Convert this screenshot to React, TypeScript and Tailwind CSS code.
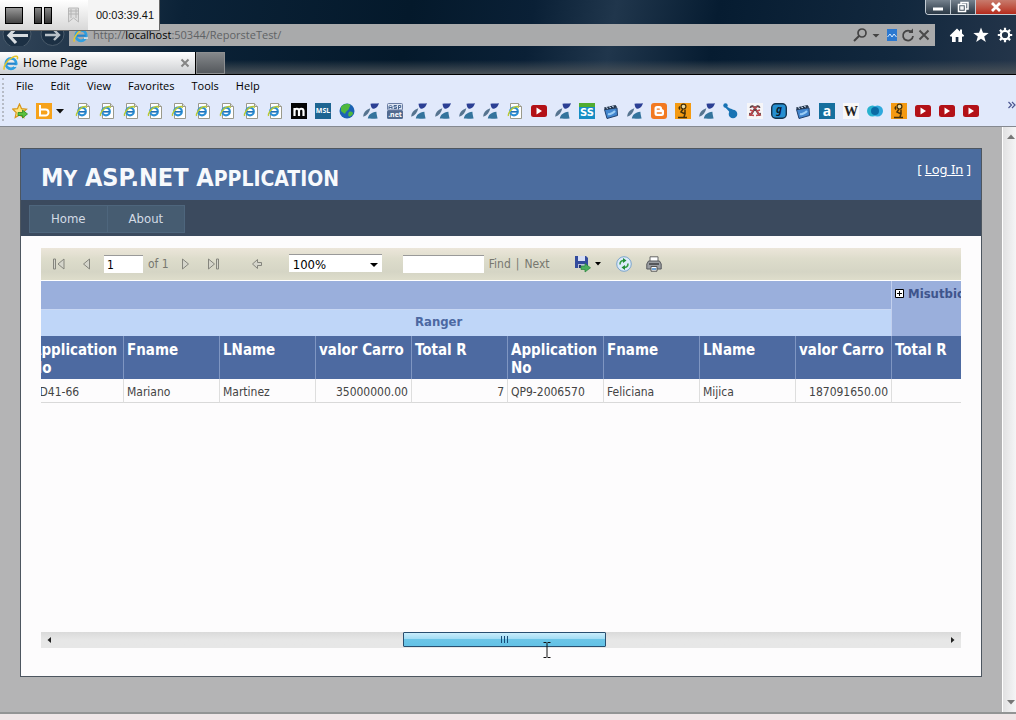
import React from "react";

const UI = "font-['Open_Sans','Noto_Sans',sans-serif]";
const TAHOMA = "font-['DejaVu_Sans_Condensed','DejaVu_Sans',sans-serif]";

type IconProps = { className?: string };

function Svg({ children, className = "size-4", box = "0 0 16 16" }: { children: React.ReactNode; className?: string; box?: string }) {
  return (
    <svg viewBox={box} className={`${className} block shrink-0`} aria-hidden="true">
      {children}
    </svg>
  );
}

function IeLogo({ className }: IconProps) {
  return (
    <Svg className={className}>
      <circle cx="8" cy="8.6" r="5.2" fill="none" stroke="#2f9fe0" strokeWidth="2.8" />
      <path d="M4 7.6h8.6v2.2H4z" fill="#2484cc" />
      <path d="M11 10.2h4v1.6l-4 .2z" fill="#dfe8ee" />
      <path d="M1.4 14.6C-.2 12 4 5.400 9 2.600c4-2.200 6.600-1.800 5.200 1.600" fill="none" stroke="#e6c62c" strokeWidth="1.5" />
    </Svg>
  );
}

function PageE() {
  return (
    <Svg>
      <path d="M3.500.5h8l3 3v12h-11z" fill="#fff" stroke="#9a9a8c" />
      <path d="M11.500.5v3h3" fill="#ddd" stroke="#9a9a8c" />
      <circle cx="7" cy="8.500" r="3.800" fill="none" stroke="#2a8ed4" strokeWidth="2.200" />
      <path d="M4 8h6.500v1.600H4z" fill="#1d6fb8" />
      <path d="M1.500 13C.6 10.500 4 6 7.500 4.200c2.500-1.200 4.200-1 3.600.8" fill="none" stroke="#b9c932" strokeWidth="1.400" />
    </Svg>
  );
}

function AddFavorite() {
  return (
    <Svg>
      <path d="M7.500 1l2 4.600 5 .5-3.700 3.400 1 5-4.300-2.600L3.200 14.500l1-5L.6 6.100l4.900-.5z" fill="#ffe680" stroke="#d8961a" strokeWidth="1.200" />
      <path d="M6 9.500h4.500V7l5 4-5 4v-2.500H6z" fill="#5ac13e" stroke="#2b8a24" strokeWidth=".8" />
    </Svg>
  );
}

function Bing() {
  return (
    <Svg>
      <rect width="16" height="16" fill="#f6a21b" />
      <path d="M4 2v10.500h5.500a3 3 0 0 0 0-6H5" fill="none" stroke="#fff" strokeWidth="2" />
    </Svg>
  );
}

function MTile() {
  return (
    <Svg>
      <rect width="16" height="16" fill="#050505" />
      <path d="M3.500 13V5M3.500 8c0-3 4.500-3 4.500 0v5M8 8c0-3 4.500-3 4.500 0v5" fill="none" stroke="#fff" strokeWidth="2.200" />
    </Svg>
  );
}

function TextTile({ label, bg, size, color = "#fff", font = "Noto Sans" }: { label: string; bg: string; size: number; color?: string; font?: string }) {
  return (
    <Svg>
      <rect width="16" height="16" fill={bg} />
      <text x="8" y={8 + size * 0.34} textAnchor="middle" fontFamily={font} fontWeight="700" fontSize={size} fill={color}>
        {label}
      </text>
    </Svg>
  );
}

function Globe() {
  return (
    <Svg>
      <circle cx="8" cy="8" r="7.500" fill="#1b62b4" />
      <path d="M2 4c2-3 7-4 9-2.500 1 1.500-1 2.500-1 4S7 8 6.500 10 3 9 2 8zM10 9c2-1 4 0 4 1.500S11 14 10 13.500 9 10 10 9z" fill="#4fb83c" />
    </Svg>
  );
}

function Leaf() {
  return (
    <Svg>
      <path d="M7.500.8C10 .4 13.500.8 16 .3c-1 3-2.500 4.900-5 5.400C9 6 8 4.500 7.500.8z" fill="#2b3f94" />
      <path d="M.3 13.800C0 10 2.500 7 7.300 5.200 6.500 9 4.300 12.300.3 13.800z" fill="#56748f" />
      <path d="M4.800 15.600C5.500 11.500 8.200 9.400 13.400 8.700c.1 2.400.6 4.200 1.200 6.700-3 .4-6.500.4-9.800.2z" fill="#34749d" />
    </Svg>
  );
}

function AspNet() {
  return (
    <Svg>
      <rect y="7" width="16" height="9" rx="1.500" fill="#526b90" />
      <rect x=".5" y=".5" width="15" height="6.500" rx="1" fill="#dce4f2" stroke="#6c7fa5" />
      <path d="M2 6V3.500L3.500 2 5 3.500V6M2 4.500h3M9.800 2.500H7v1.500h2.500v1.500H6.800M11.500 6.500v-4h2.200v2h-2" fill="none" stroke="#44638e" />
      <text x="8" y="14" textAnchor="middle" fontSize="7" fontWeight="700" fontFamily="Noto Sans" fill="#fff">.net</text>
    </Svg>
  );
}

function Tube() {
  return (
    <Svg>
      <rect y="2" width="16" height="12" rx="2.500" fill="#b31117" />
      <path d="M5.500 4.500v7l5.500-3.500z" fill="#fff" />
    </Svg>
  );
}

function Slides() {
  return (
    <Svg>
      <rect width="16" height="16" fill="#168dc4" />
      <rect width="16" height="4" fill="#51ac2f" />
      <text x="8" y="13" textAnchor="middle" fontSize="10" fontWeight="700" fontFamily="DejaVu Sans" fill="#fff">SS</text>
    </Svg>
  );
}

function Film() {
  return (
    <Svg>
      <path d="M1.500 6.500L14 5l.5 7.500L4 15.500z" fill="#4286cf" stroke="#20406d" />
      <path d="M1 4.500L12.500 2l1.800 2.500L2 7z" fill="#26374d" />
      <path d="M3 4.500l2 1M6 3.800l2 1M9 3.100l2 1" stroke="#c5d8ed" />
      <path d="M5 11c3 1 5-1 7-3" stroke="#9bcdf4" fill="none" strokeWidth="2" />
    </Svg>
  );
}

function Blogger() {
  return (
    <Svg>
      <rect width="16" height="16" rx="3" fill="#f27921" />
      <path d="M6 3h2.500a2.500 2.500 0 0 1 2.500 2.500c0 1.200 2 .8 2 2.300V10.500a2.500 2.500 0 0 1-2.500 2.500H6A2.500 2.500 0 0 1 3.500 10.500V5.500A2.500 2.500 0 0 1 6 3z" fill="#fff" />
      <path d="M6.300 6.100h2M6.300 10h4" stroke="#f27921" strokeWidth="1.400" strokeLinecap="round" />
    </Svg>
  );
}

function Figure() {
  return (
    <Svg>
      <rect width="16" height="16" fill="#f49a12" />
      <circle cx="8.500" cy="3.600" r="2.400" fill="#ead9a0" stroke="#45310c" strokeWidth="1.200" />
      <path d="M8 6l-2 3 4 2-1 3M10 6.500v4M5 3.500c-1 1-1 2 0 3M3 14.500h9" fill="none" stroke="#45310c" strokeWidth="1.500" />
    </Svg>
  );
}

function Dots() {
  return (
    <Svg>
      <circle cx="10" cy="11" r="4.300" fill="#1873b4" />
      <circle cx="2.500" cy="2.500" r="2.200" fill="#1873b4" />
      <path d="M3 2c2 4 6 3 8 6l-4 3C7 8 3 6 2 4z" fill="#1873b4" />
    </Svg>
  );
}

function Knot() {
  return (
    <Svg>
      <rect width="16" height="16" fill="#f6f6f8" />
      <path d="M3.500 5c0-3 4-2 5 1l3 5c1 2 2 1 1.500-1M12.500 5c0-3-4-2-5 1l-3 5c-1 2-2 1-1.500-1" fill="none" stroke="#5d4549" strokeWidth="1.800" />
      <path d="M3 7l3 1-3 4 4 .5M13 7l-3 1 3 4-4 .5M6 3.500l2 2 2-2" fill="none" stroke="#c0484d" strokeWidth="1.500" />
    </Svg>
  );
}

function GBadge() {
  return (
    <Svg>
      <rect x=".7" y=".7" width="14.600" height="14.600" rx="4" fill="#258fd1" stroke="#12324c" strokeWidth="1.400" />
      <text x="8" y="10" textAnchor="middle" fontSize="10" fontStyle="italic" fontWeight="700" fontFamily="Noto Sans" fill="#0a1a2c">g</text>
    </Svg>
  );
}

function Rings() {
  return (
    <Svg>
      <circle cx="5.500" cy="8" r="5.500" fill="#28b2cf" />
      <circle cx="10.500" cy="8" r="5.500" fill="#2fa9dd" />
      <circle cx="8" cy="8" r="4" fill="#0a6aa4" />
    </Svg>
  );
}

const favorites: [string, React.ReactNode][] = [
  ...Array.from({ length: 9 }, (_, i): [string, React.ReactNode] => [`Bookmark ${i + 1}`, <PageE />]),
  ["m", <MTile />],
  ["MSL", <TextTile label="MSL" bg="#1d6592" size={7} />],
  ["World", <Globe />],
  ["Feather 1", <Leaf />],
  ["ASP.NET", <AspNet />],
  ["Feather 2", <Leaf />],
  ["Feather 3", <Leaf />],
  ["Feather 4", <Leaf />],
  ["Feather 5", <Leaf />],
  ["Page", <PageE />],
  ["Video 1", <Tube />],
  ["Feather 6", <Leaf />],
  ["SS", <Slides />],
  ["Film 1", <Film />],
  ["Feather 7", <Leaf />],
  ["Blog", <Blogger />],
  ["Figure 1", <Figure />],
  ["Feather 8", <Leaf />],
  ["Dots", <Dots />],
  ["Knot", <Knot />],
  ["g", <GBadge />],
  ["Film 2", <Film />],
  ["a", <TextTile label="a" bg="#156f9e" size={14} />],
  ["Wikipedia", <TextTile label="W" bg="#f8f8f8" size={14} color="#222" font="Liberation Serif" />],
  ["Rings", <Rings />],
  ["Figure 2", <Figure />],
  ["Video 2", <Tube />],
  ["Video 3", <Tube />],
  ["Video 4", <Tube />],
];

function Recorder() {
  return (
    <div className="absolute left-0 top-0 z-10 flex h-[31px] w-40 items-center border-b border-r border-[#666] bg-[#f4f4f4]">
      <div className="flex h-full w-[88px] items-center bg-gradient-to-b from-white to-[#d8d8d8] pl-[5px]">
        <button aria-label="Stop" className="h-[17px] w-[18px] border border-black bg-gradient-to-b from-[#999] to-[#444]" />
        <button aria-label="Pause" className="ml-[11px] flex gap-[2px]">
          <span className="h-[17px] w-2 border border-black bg-gradient-to-b from-[#888] to-[#333]" />
          <span className="h-[17px] w-2 border border-black bg-gradient-to-b from-[#888] to-[#333]" />
        </button>
        <button aria-label="Bookmark" className="ml-[14px]">
          <Svg>
            <path d="M2.500 1h10v14l-5-4-5 4z" fill="#dedede" stroke="#b8b8b8" />
            <path d="M5 2v9M10 2v9M2 4h11M2 7h11" stroke="#b4b4b4" />
          </Svg>
        </button>
      </div>
      <span className="pl-2 font-['Liberation_Sans',sans-serif] text-[11px] text-[#111]">00:03:39.41</span>
    </div>
  );
}

function Chrome() {
  return (
    <div className="relative border-b border-black bg-[linear-gradient(100deg,#35485c_0%,#0b2237_18%,#04192b_40%,#0a2036_52%,#20364c_60%,#061c31_70%,#12283e_88%,#24354a_100%)]">
      <Recorder />
      <div className="absolute right-0 top-0 flex h-[15px] overflow-hidden rounded-bl border-b border-l border-[#c3ccd4]">
        <button aria-label="Minimize" className="flex w-[25px] items-center justify-center border-r border-[#c3ccd4] bg-gradient-to-b from-[#75818d] to-[#2b3946]">
          <Svg className="h-3 w-3" box="0 0 12 12"><path d="M1 6.500h10v3H1z" fill="#fff" /></Svg>
        </button>
        <button aria-label="Restore" className="flex w-[25px] items-center justify-center border-r border-[#c3ccd4] bg-gradient-to-b from-[#75818d] to-[#2b3946]">
          <Svg className="h-3 w-3" box="0 0 12 12"><path d="M4 3V1.500h7v6.500H9M1.500 3.500h7v7h-7zM4 6h2v2H4z" fill="none" stroke="#fff" strokeWidth="1.500" /></Svg>
        </button>
        <button aria-label="Close" className="flex w-10 items-center justify-center bg-gradient-to-b from-[#c77a6c] to-[#b5281a]">
          <Svg className="h-3 w-3" box="0 0 12 12"><path d="M2 2l8 8M10 2l-8 8" stroke="#fff" strokeWidth="2.800" /></Svg>
        </button>
      </div>

      <div className="flex h-[46px] items-end">
        <div className="flex h-[22px] w-[69px] shrink-0 items-start gap-2 overflow-hidden pl-[2px]">
          <button aria-label="Back">
            <Svg className="size-[30px]" box="0 0 30 30">
              <circle cx="15" cy="10" r="14" fill="#1c3044" stroke="#4a5b6b" />
              <path d="M26 11.500H8M14 4l-7 7.500 7 7.500" fill="none" stroke="#d7dce0" strokeWidth="3.200" />
            </Svg>
          </button>
          <button aria-label="Forward">
            <Svg className="size-[25px]" box="0 0 25 25">
              <circle cx="12.500" cy="10" r="11.500" fill="#1c3044" stroke="#4a5b6b" />
              <path d="M5 11h14M14 6l5 5-5 5" fill="none" stroke="#b9c1c8" strokeWidth="2.400" />
            </Svg>
          </button>
        </div>
        <div className="flex h-[22px] min-w-0 flex-1 items-center bg-[#a9aaab] pl-1 pr-[3px]">
          <IeLogo />
          <div role="textbox" aria-label="Address" contentEditable suppressContentEditableWarning className={`${UI} flex-1 whitespace-nowrap pl-1 text-[11px] text-[#5f6265] outline-none`}>
            http://<span className="text-black">localhost</span>:50344/ReporsteTest/
          </div>
          <div className="flex items-center">
            <button aria-label="Search">
              <Svg><circle cx="10" cy="6" r="4" fill="none" stroke="#444" strokeWidth="1.700" /><path d="M7 9l-5 5" stroke="#444" strokeWidth="2" /></Svg>
            </button>
            <button aria-label="Search options" className="ml-[2px]"><Svg className="size-3" box="0 0 12 12"><path d="M2.500 5h7L6 8.500z" fill="#444" /></Svg></button>
            <button aria-label="Compatibility view" className="ml-[2px]">
              <Svg><path d="M3 2h10v12H3z" fill="#2b78d0" /><path d="M3.500 10l2.500-3 2 3 2-3 2.500 3" fill="none" stroke="#d8ebff" /></Svg>
            </button>
            <button aria-label="Refresh">
              <Svg><path d="M12 5.500A5 5 0 1 0 13 9" fill="none" stroke="#444" strokeWidth="1.800" /><path d="M8.500 6H13V1.500z" fill="#444" /></Svg>
            </button>
            <button aria-label="Stop loading"><Svg><path d="M3.500 3.500l9 9M12.500 3.500l-9 9" stroke="#4a4a4a" strokeWidth="2" /></Svg></button>
          </div>
        </div>
        <div className="flex h-[22px] shrink-0 items-center gap-2 pl-[14px] pr-[3px]">
          <button aria-label="Home page"><Svg><path d="M8 1.500L.8 8.500 2 10l1-.8V15h3.700v-5h2.700v5H13V9.200l1 .8 1.200-1.500-2.200-2V2.500h-2v2z" fill="#fff" /></Svg></button>
          <button aria-label="Favorites"><Svg><path d="M8 .5l2 5.200 5.700.2-4.500 3.500 1.600 5.500L8 11.700l-4.800 3.200 1.600-5.500L.3 5.900 6 5.700z" fill="#fff" /></Svg></button>
          <button aria-label="Settings">
            <Svg><circle cx="8" cy="8" r="4.200" fill="none" stroke="#fff" strokeWidth="2.200" /><path d="M8 .8v2.600M8 12.600v2.600M.8 8h2.600M12.600 8h2.600M2.900 2.900l1.900 1.900M11.200 11.200l1.900 1.900M13.100 2.900l-1.900 1.900M4.800 11.200l-1.900 1.900" stroke="#fff" strokeWidth="2.200" /></Svg>
          </button>
        </div>
      </div>

      <div className="flex h-7 items-end bg-gradient-to-b from-transparent via-transparent to-[#4a5258]">
        <div className={`${UI} flex h-[22px] w-[196px] items-center border-r border-black bg-gradient-to-b from-white to-[#cdcfd2] pl-[3px] pr-1`}>
          <IeLogo />
          <span className="flex-1 pl-1 text-xs text-black">Home Page</span>
          <button aria-label="Close tab"><Svg className="size-3" box="0 0 12 12"><path d="M2.500 2.500l7 7M9.500 2.500l-7 7" stroke="#858585" strokeWidth="2" /></Svg></button>
        </div>
        <button aria-label="New tab" className="h-[22px] w-[29px] border border-[#8d8f91] bg-gradient-to-b from-[#85888b] to-[#55595d]" />
      </div>
    </div>
  );
}

function Bars() {
  return (
    <div className="flex border-b border-[#858990] bg-[#e1e9fb] pb-[5px] pl-[2px] pt-[3px]">
      <div className="w-0 border-l-2 border-dotted border-[#b6bbc6]" />
      <div className="min-w-0 flex-1">
        <nav className={`${UI} flex h-4 items-center gap-[17px] pl-3 text-[11px] text-black`}>
          {["File", "Edit", "View", "Favorites", "Tools", "Help"].map((m) => (
            <button key={m}>{m}</button>
          ))}
        </nav>
        <div className="flex h-[27px] items-center pl-2 pt-[7px]">
          <button aria-label="Add to favorites"><AddFavorite /></button>
          <button aria-label="Bing" className="ml-2"><Bing /></button>
          <button aria-label="Bing options"><Svg><path d="M4 6h8l-4 4.500z" fill="#111" /></Svg></button>
          <div className="flex gap-2 pl-[7px]">
            {favorites.map(([name, icon]) => (
              <a key={name} href="#" title={name} aria-label={name}>{icon}</a>
            ))}
          </div>
          <button aria-label="More favorites" className="ml-auto self-start"><Svg className="h-2 w-2" box="0 0 8 8"><path d="M.5 1l3 3-3 3M4 1l3 3-3 3" fill="none" stroke="#4b5690" strokeWidth="1.200" /></Svg></button>
        </div>
      </div>
    </div>
  );
}

const metal = { fill: "#d5d5cb", stroke: "#85857d", strokeWidth: 1 };

function ReportToolbar() {
  return (
    <div className={`${TAHOMA} flex h-8 items-center bg-[linear-gradient(#ece6da,#dddccb_35%,#d5d5c5_75%,#deddcb)] text-[12px] text-[#77776f]`}>
      <button aria-label="First page" className="ml-[10px]"><Svg><path d="M2.500 3v10h2V3zM13 3v10L7 8z" {...metal} /></Svg></button>
      <button aria-label="Previous page" className="ml-[13px]"><Svg><path d="M9.500 3v10l-6-5z" {...metal} /></Svg></button>
      <input aria-label="Current page" defaultValue="1" className="ml-2 h-[18px] w-[39px] border-t border-[#999] bg-white px-[3px] text-black outline-none" />
      <span className="ml-[5px]">of 1</span>
      <button aria-label="Next page" className="ml-[10px]"><Svg><path d="M3.500 3v10l6-5z" {...metal} /></Svg></button>
      <button aria-label="Last page" className="ml-[10px]"><Svg><path d="M3.500 3v10l6-5zM11.500 3v10h2V3z" {...metal} /></Svg></button>
      <button aria-label="Back to parent report" className="ml-7"><Svg><path d="M3.500 8l5-4.500v3h4v3h-4v3z" {...metal} /></Svg></button>
      <div className="relative ml-6">
        <select aria-label="Zoom" className="h-[18px] w-[93px] appearance-none border-t border-[#999] bg-white pl-1 text-[13px] text-black outline-none">
          <option>100%</option>
        </select>
        <span className="pointer-events-none absolute right-1 top-[7px]"><Svg className="h-2 w-2" box="0 0 8 8"><path d="M0 2h8l-4 4z" fill="#000" /></Svg></span>
      </div>
      <input aria-label="Find text" className="ml-[21px] h-[18px] w-[81px] border-t border-[#999] bg-white px-1 text-black outline-none" />
      <button className="ml-[5px]">Find</button>
      <span className="mx-[5px]">|</span>
      <button>Next</button>
      <button aria-label="Export" className="ml-6 flex items-center gap-[2px]">
        <Svg className="size-[18px]" box="0 0 18 18">
          <path d="M1 1h11l2 2v10H1z" fill="#344c9d" />
          <path d="M4 1h7v5H4z" fill="#d7def3" /><path d="M4 9h7v4H4z" fill="#b9c1d8" /><path d="M5 10h2v3H5z" fill="#25356e" />
          <path d="M7 11h4V8.500l5.500 4.300L11 17v-2.500H7z" fill="#4bae5d" stroke="#27843b" strokeWidth=".7" />
        </Svg>
        <Svg className="size-2" box="0 0 8 8"><path d="M1 2h6L4 5.500z" fill="#000" /></Svg>
      </button>
      <button aria-label="Refresh report" className="ml-[14px]">
        <Svg>
          <circle cx="8" cy="8" r="7.300" fill="#dcebfa" stroke="#7ba5cd" />
          <path d="M4 8.500c0-2.500 1-4 4-4M12 7.500c0 2.500-1 4-4 4" fill="none" stroke="#35a045" strokeWidth="1.600" />
          <path d="M7 2v5l3.500-2.500zM9 9v5l-3.500-2.500z" fill="#228c36" />
        </Svg>
      </button>
      <button aria-label="Print" className="ml-[14px]">
        <Svg>
          <path d="M4 .8h8v5H4z" fill="#fff" stroke="#666" />
          <path d="M2.500 5h11l1.700 3v5H.8V8z" fill="#9a9da1" stroke="#55585c" />
          <path d="M3 8h10" stroke="#3c3f43" strokeWidth="1.500" /><path d="M5 10.500h6v4.700H5z" fill="#fff" stroke="#555" /><path d="M6 12h4v2H6z" fill="#6ea4d8" />
        </Svg>
      </button>
    </div>
  );
}

const columns = ["Application No", "Fname", "LName", "valor Carro", "Total R", "Application No", "Fname", "LName", "valor Carro", "Total R"];
const row = ["QD41-66", "Mariano", "Martinez", "35000000.00", "7", "QP9-2006570", "Feliciana", "Mijica", "187091650.00", ""];
const numeric = new Set([3, 4, 8, 9]);

function ReportTable() {
  return (
    <div className="overflow-hidden border-t border-white">
      <table className={`${TAHOMA} -ml-[14px] w-[960px] table-fixed border-separate border-spacing-0 text-[12px] text-[#444]`}>
        <thead>
          <tr className="h-[29px] bg-[#9aafdc]">
            <td colSpan={9} className="border-b border-[#c9d8f4]" />
            <th rowSpan={2} className="border-l border-[#c2d0ee] px-[3px] pt-[3px] text-left align-top text-[13px] font-bold text-[#3f558c]">
              <div className="flex items-center gap-1 whitespace-nowrap">
                <button aria-label="Expand Misutbichi">
                  <Svg className="size-[9px]" box="0 0 9 9"><path d="M.5.5h8v8h-8z" fill="#fff" stroke="#000" /><path d="M2 4.500h5M4.500 2v5" stroke="#000" /></Svg>
                </button>
                Misutbichi
              </div>
            </th>
          </tr>
          <tr className="h-[26px] bg-[#bfd6f8] text-left text-[13px] text-[#4c68a2]">
            <td colSpan={4} />
            <th colSpan={5} className="px-1 pb-[2px] font-bold">Ranger</th>
          </tr>
          <tr className="h-[43px] bg-[#4d6aa1] text-left text-[15px] leading-[18px] text-white">
            {columns.map((c, i) => (
              <th key={i} className="whitespace-normal border-l border-[#7f96c2] pl-[3px] pr-0 pt-[5px] align-top font-bold">{c}</th>
            ))}
          </tr>
        </thead>
        <tbody>
          <tr className="h-6">
            {row.map((v, i) => (
              <td key={i} className={`border-b border-l border-b-[#d9d9d9] border-l-[#dedede] px-[3px] pt-[3px] ${numeric.has(i) ? "text-right" : ""}`}>{v}</td>
            ))}
          </tr>
        </tbody>
      </table>
    </div>
  );
}

function HorizontalScroll() {
  return (
    <div className="flex h-4 items-center bg-gradient-to-b from-[#dadada] to-[#e7e7e7] to-50%">
      <button aria-label="Scroll left" className="flex w-4 justify-center"><Svg className="size-2" box="0 0 8 8"><path d="M6 1v6L2.500 4z" fill="#222" /></Svg></button>
      <div className="grid h-full flex-1 grid-cols-[346fr_203fr_339fr]">
        <div />
        <div className="flex h-[15px] items-center justify-center gap-[2px] rounded-[1px] border border-[#284f70] bg-[linear-gradient(#c9edfb,#a2ddf5_45%,#6bc5e7_50%,#63c2e6)]">
          <span className="h-[7px] w-px bg-[#164b78]" />
          <span className="h-[7px] w-px bg-[#164b78]" />
          <span className="h-[7px] w-px bg-[#164b78]" />
        </div>
      </div>
      <button aria-label="Scroll right" className="flex w-4 justify-center"><Svg className="size-2" box="0 0 8 8"><path d="M2 1v6l3.500-3z" fill="#222" /></Svg></button>
    </div>
  );
}

export default function App() {
  return (
    <div className="flex min-h-screen flex-col overflow-hidden bg-[#b4b4b5]">
      <Chrome />
      <Bars />
      <div className="flex flex-1">
        <main className="flex min-w-0 flex-1 flex-col px-5 pb-[35px] pt-[21px]">
          <div className="relative flex flex-1 flex-col border border-[#4d5660] bg-[#fdfcfd]">
            <header className="flex h-[51px] items-start justify-between bg-[#4b6c9e] pl-5 pr-[10px] text-white">
              <h1 className={`${TAHOMA} pt-[9px] text-[25px] font-bold leading-[40px] text-[#f7f9fc]`}>
                M<span className="text-[21px] uppercase">y</span> ASP.NET A<span className="text-[21px] uppercase">pplication</span>
              </h1>
              <div className="pt-[10px] font-['Noto_Sans',sans-serif] text-[13px] leading-5">[ <a href="#" className="underline">Log In</a> ]</div>
            </header>
            <nav className={`${TAHOMA} flex h-9 items-start bg-[#3b4a5e] px-2 pt-[5px] text-[13px] text-[#d3dbe5]`}>
              <a href="#" className="border border-[#4e667d] bg-[#465c71] px-[21px] leading-[26px]">Home</a>
              <a href="#" className="border border-l-0 border-[#4e667d] bg-[#465c71] px-[21px] leading-[26px]">About</a>
            </nav>
            <section className="flex flex-1 flex-col px-5 pb-7 pt-3">
              <ReportToolbar />
              <ReportTable />
              <div className="flex-1" />
              <HorizontalScroll />
            </section>
            <span className="pointer-events-none absolute bottom-[18px] left-[54.800%] -translate-x-1/2">
              <Svg className="h-4 w-2" box="0 0 8 16"><path d="M.5.5h3M4.500.5h3M4 1v14M.5 15.500h3M4.500 15.500h3" stroke="#111" /></Svg>
            </span>
          </div>
        </main>
        <div className="flex w-[14px] shrink-0 flex-col justify-between border-l border-white bg-[linear-gradient(90deg,#e1e1e2,#f5f5f6)] py-[6px] pl-1">
          <button aria-label="Scroll up"><Svg className="size-2" box="0 0 8 8"><path d="M0 6h8L4 1.500z" fill="#777" /></Svg></button>
          <button aria-label="Scroll down"><Svg className="size-2" box="0 0 8 8"><path d="M0 2h8L4 6.500z" fill="#777" /></Svg></button>
        </div>
      </div>
      <footer className="h-2 border-t-2 border-[#929494] bg-[#efe6e7]" />
    </div>
  );
}
